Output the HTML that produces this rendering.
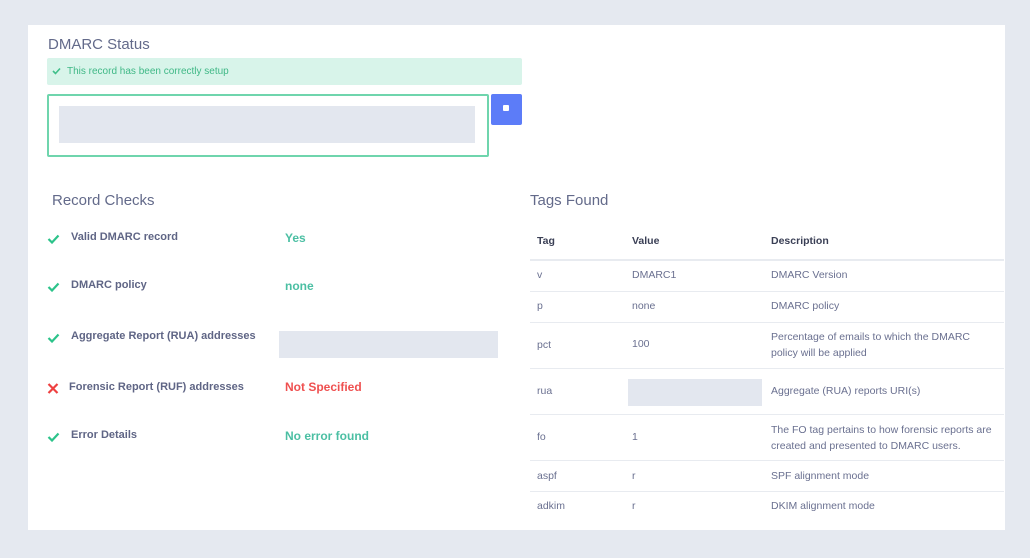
<!DOCTYPE html>
<html><head><style>
*{margin:0;padding:0;box-sizing:border-box}
body{width:1030px;height:558px;background:#e5e9f0;font-family:"Liberation Sans",sans-serif;position:relative;overflow:hidden}
.panel{position:absolute;left:28px;top:25px;width:977px;height:505px;background:#fff}
.a{position:absolute;white-space:nowrap}
.h{font-size:15px;color:#636a8a}
.lbl{font-size:11px;font-weight:bold;color:#5f6585}
.val{font-size:12px;font-weight:bold}
.t{font-size:10.5px;color:#6a7090}
.line{position:absolute;left:530px;width:474px;height:1px;background:#e8ebf0}
.gray{position:absolute;background:#e3e7ef}
</style></head><body>
<div class="panel"></div>
<div class="a h" style="left:48px;top:36px">DMARC Status</div>
<div class="a" style="left:47px;top:58px;width:475px;height:27px;background:#d8f4ea;border-radius:2px"></div>
<svg class="a" style="left:52px;top:67px" width="9" height="8" viewBox="0 0 9 8"><path d="M1 4l2.5 2.5L8 1.5" stroke="#3fbf8a" stroke-width="1.6" fill="none"/></svg>
<div class="a" style="left:67px;top:66px;font-size:10px;color:#3fb886">This record has been correctly setup</div>
<div class="a" style="left:47px;top:94px;width:442px;height:63px;border:2px solid #6fd5ad;border-radius:2px"></div>
<div class="gray" style="left:59px;top:106px;width:416px;height:37px"></div>
<div class="a" style="left:491px;top:94px;width:31px;height:31px;background:#5c7cf8;border-radius:2px"></div>
<div class="a" style="left:503px;top:105px;width:6px;height:6px;background:#fff;border-radius:1px"></div>
<div class="a h" style="left:52px;top:192px">Record Checks</div>
<div class="a h" style="left:530px;top:192px">Tags Found</div>

<svg class="a" style="left:47px;top:234px" width="13" height="10" viewBox="0 0 13 10"><path d="M1.5 5l3.5 3.5L11.5 1.5" stroke="#2cc38a" stroke-width="2.2" fill="none"/></svg>
<div class="a lbl" style="left:71px;top:231px">Valid DMARC record</div>
<div class="a val" style="left:285px;top:231px;color:#4bbfa3">Yes</div>

<svg class="a" style="left:47px;top:282px" width="13" height="10" viewBox="0 0 13 10"><path d="M1.5 5l3.5 3.5L11.5 1.5" stroke="#2cc38a" stroke-width="2.2" fill="none"/></svg>
<div class="a lbl" style="left:71px;top:279px">DMARC policy</div>
<div class="a val" style="left:285px;top:279px;color:#4bbfa3">none</div>

<svg class="a" style="left:47px;top:333px" width="13" height="10" viewBox="0 0 13 10"><path d="M1.5 5l3.5 3.5L11.5 1.5" stroke="#2cc38a" stroke-width="2.2" fill="none"/></svg>
<div class="a lbl" style="left:71px;top:330px">Aggregate Report (RUA) addresses</div>
<div class="gray" style="left:279px;top:331px;width:219px;height:27px"></div>

<svg class="a" style="left:47px;top:383px" width="12" height="11" viewBox="0 0 12 11"><path d="M1.5 1l9 9M10.5 1l-9 9" stroke="#ee4040" stroke-width="2.2" fill="none"/></svg>
<div class="a lbl" style="left:69px;top:381px">Forensic Report (RUF) addresses</div>
<div class="a val" style="left:285px;top:380px;color:#ef5050">Not Specified</div>

<svg class="a" style="left:47px;top:432px" width="13" height="10" viewBox="0 0 13 10"><path d="M1.5 5l3.5 3.5L11.5 1.5" stroke="#2cc38a" stroke-width="2.2" fill="none"/></svg>
<div class="a lbl" style="left:71px;top:429px">Error Details</div>
<div class="a val" style="left:285px;top:429px;color:#4bbfa3">No error found</div>

<div class="a" style="left:537px;top:235px;font-size:10.5px;font-weight:bold;color:#3a3f55">Tag</div>
<div class="a" style="left:632px;top:235px;font-size:10.5px;font-weight:bold;color:#3a3f55">Value</div>
<div class="a" style="left:771px;top:235px;font-size:10.5px;font-weight:bold;color:#3a3f55">Description</div>
<div class="line" style="top:259px;height:2px"></div>
<div class="line" style="top:291px"></div>
<div class="line" style="top:322px"></div>
<div class="line" style="top:368px"></div>
<div class="line" style="top:414px"></div>
<div class="line" style="top:460px"></div>
<div class="line" style="top:491px"></div>

<div class="a t" style="left:537px;top:269px">v</div><div class="a t" style="left:632px;top:269px">DMARC1</div><div class="a t" style="left:771px;top:269px">DMARC Version</div>
<div class="a t" style="left:537px;top:300px">p</div><div class="a t" style="left:632px;top:300px">none</div><div class="a t" style="left:771px;top:300px">DMARC policy</div>
<div class="a t" style="left:537px;top:339px">pct</div><div class="a t" style="left:632px;top:338px">100</div>
<div class="a t" style="left:771px;top:330px;line-height:15.5px">Percentage of emails to which the DMARC<br>policy will be applied</div>
<div class="a t" style="left:537px;top:385px">rua</div>
<div class="gray" style="left:628px;top:379px;width:134px;height:27px"></div>
<div class="a t" style="left:771px;top:385px">Aggregate (RUA) reports URI(s)</div>
<div class="a t" style="left:537px;top:431px">fo</div><div class="a t" style="left:632px;top:431px">1</div>
<div class="a t" style="left:771px;top:423px;line-height:15.5px">The FO tag pertains to how forensic reports are<br>created and presented to DMARC users.</div>
<div class="a t" style="left:537px;top:470px">aspf</div><div class="a t" style="left:632px;top:470px">r</div><div class="a t" style="left:771px;top:470px">SPF alignment mode</div>
<div class="a t" style="left:537px;top:500px">adkim</div><div class="a t" style="left:632px;top:500px">r</div><div class="a t" style="left:771px;top:500px">DKIM alignment mode</div>
</body></html>
